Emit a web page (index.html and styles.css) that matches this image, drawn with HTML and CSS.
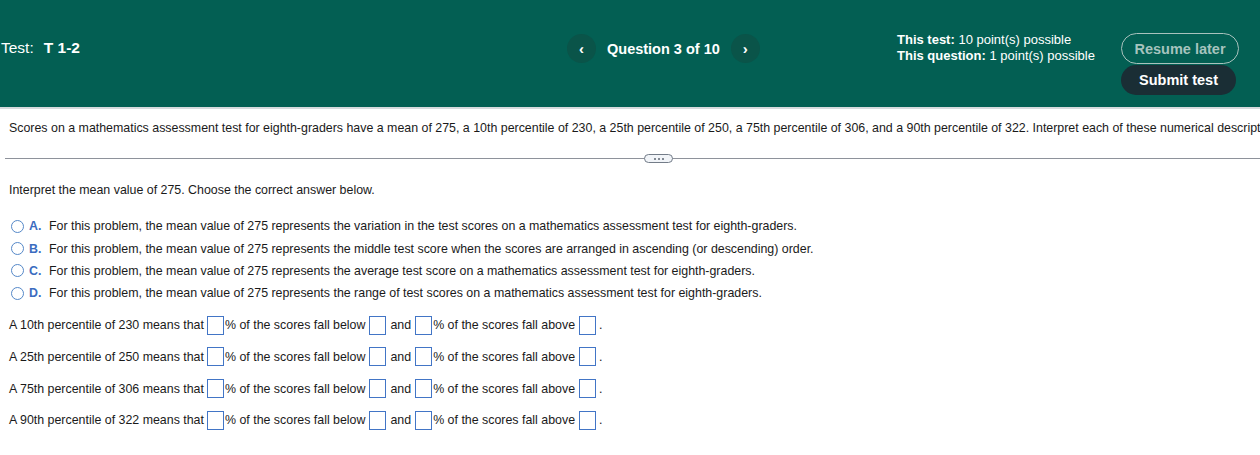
FILE: index.html
```html
<!DOCTYPE html>
<html>
<head>
<meta charset="utf-8">
<link rel="stylesheet" href="styles.css">
</head>
<body>
<header class="top">
  <div class="title"><span class="lbl">Test:</span><b>T 1-2</b></div>
  <div class="nav">
    <span class="circ">&#8249;</span>
    <span class="qnum">Question 3 of 10</span>
    <span class="circ">&#8250;</span>
  </div>
  <div class="pts">
    <div><b>This test:</b> 10 point(s) possible</div>
    <div><b>This question:</b> 1 point(s) possible</div>
  </div>
  <div class="btns">
    <span class="resume">Resume later</span>
    <span class="submit">Submit test</span>
  </div>
</header>
<main>
  <p class="stem">Scores on a mathematics assessment test for eighth-graders have a mean of 275, a 10th percentile of 230, a 25th percentile of 250, a 75th percentile of 306, and a 90th percentile of 322. Interpret each of these numerical descriptive measures.</p>
  <div class="divider"><span class="pill"><i></i><i></i><i></i></span></div>
  <p class="prompt">Interpret the mean value of 275. Choose the correct answer below.</p>
  <ul class="opts">
    <li><span class="radio"></span><b>A.</b><span>For this problem, the mean value of 275 represents the variation in the test scores on a mathematics assessment test for eighth-graders.</span></li>
    <li><span class="radio"></span><b>B.</b><span>For this problem, the mean value of 275 represents the middle test score when the scores are arranged in ascending (or descending) order.</span></li>
    <li><span class="radio"></span><b>C.</b><span>For this problem, the mean value of 275 represents the average test score on a mathematics assessment test for eighth-graders.</span></li>
    <li><span class="radio"></span><b>D.</b><span>For this problem, the mean value of 275 represents the range of test scores on a mathematics assessment test for eighth-graders.</span></li>
  </ul>
  <div class="rows">
    <div class="row">A 10th percentile of 230 means that<span class="box b1"></span>% of the scores fall below<span class="box b2"></span>and<span class="box b3"></span>% of the scores fall above<span class="box b4"></span>.</div>
    <div class="row">A 25th percentile of 250 means that<span class="box b1"></span>% of the scores fall below<span class="box b2"></span>and<span class="box b3"></span>% of the scores fall above<span class="box b4"></span>.</div>
    <div class="row">A 75th percentile of 306 means that<span class="box b1"></span>% of the scores fall below<span class="box b2"></span>and<span class="box b3"></span>% of the scores fall above<span class="box b4"></span>.</div>
    <div class="row">A 90th percentile of 322 means that<span class="box b1"></span>% of the scores fall below<span class="box b2"></span>and<span class="box b3"></span>% of the scores fall above<span class="box b4"></span>.</div>
  </div>
</main>
</body>
</html>
```
FILE: styles.css
```css
* { box-sizing: border-box; }
html, body { margin: 0; padding: 0; }
body {
  width: 1260px;
  height: 455px;
  overflow: hidden;
  background: #fff;
  font-family: "Liberation Sans", Arial, sans-serif;
  color: #1a1a1a;
}
.top {
  height: 109px;
  background: #035f53;
  border-bottom: 2px solid #d6dadd;
  color: #fff;
  display: flex;
  align-items: flex-start;
  padding: 0 0 0 1px;
}
.title {
  font-size: 15.5px;
  width: 566px;
  margin-top: 39px;
}
.title .lbl { font-weight: normal; margin-right: 10px; }
.title b { font-weight: bold; }
.nav {
  display: flex;
  align-items: center;
  width: 330px;
  margin-top: 34px;
}
.circ {
  width: 29px;
  height: 29px;
  border-radius: 50%;
  background: #0a5449;
  display: flex;
  align-items: center;
  justify-content: center;
  font-size: 15px;
  font-weight: bold;
}
.qnum {
  font-weight: bold;
  font-size: 14.5px;
  margin: 0 11px 0 11px;
}
.pts {
  font-size: 13px;
  line-height: 16px;
  width: 224px;
  margin-top: 32px;
}
.btns {
  display: flex;
  flex-direction: column;
  gap: 1px;
  margin-top: 33px;
}
.resume {
  width: 118px;
  height: 31px;
  border: 1px solid #a9c2bd;
  border-radius: 16px;
  color: #a6c3be;
  font-weight: bold;
  font-size: 14.5px;
  display: flex;
  align-items: center;
  justify-content: center;
}
.submit {
  width: 115px;
  height: 30px;
  border-radius: 15px;
  background: #1a2e35;
  color: #fff;
  font-weight: bold;
  font-size: 14.5px;
  display: flex;
  align-items: center;
  justify-content: center;
}
main { padding: 0 0 0 9px; font-size: 12.4px; }
.stem {
  margin: 11px 0 0 0;
  white-space: nowrap;
  overflow: hidden;
  line-height: 16px;
}
.divider {
  margin: 22px 0 0 -4px;
  height: 1px;
  background: #8e929b;
  position: relative;
}
.pill {
  position: absolute;
  left: 639px;
  top: -4px;
  width: 29px;
  height: 9px;
  border: 1px solid #737c88;
  border-radius: 5px;
  background: #f1f4f8;
  display: flex;
  align-items: center;
  justify-content: center;
  gap: 2px;
}
.pill i { width: 2px; height: 2px; background: #5e6773; border-radius: 1px; }
.prompt { margin: 23px 0 0 0; line-height: 16px; }
.opts { list-style: none; margin: 17px 0 0 0; padding: 0; }
.opts li {
  display: flex;
  align-items: center;
  height: 22.4px;
}
.radio {
  width: 13px;
  height: 13px;
  border: 1.5px solid #5588c8;
  border-radius: 50%;
  margin: 0 5px 0 2px;
}
.opts b {
  color: #3b6cc0;
  width: 20px;
}
.rows { margin-top: 5px; }
.row {
  display: flex;
  align-items: center;
  height: 31.6px;
}
.box {
  display: inline-block;
  width: 17px;
  height: 19px;
  border: 1px solid #4275c6;
}
.b1 { margin: 0 1px 0 3px; }
.b2 { margin: 0 4px 0 4px; }
.b3 { margin: 0 1px 0 4px; }
.b4 { margin: 0 3px 0 4px; }
```
